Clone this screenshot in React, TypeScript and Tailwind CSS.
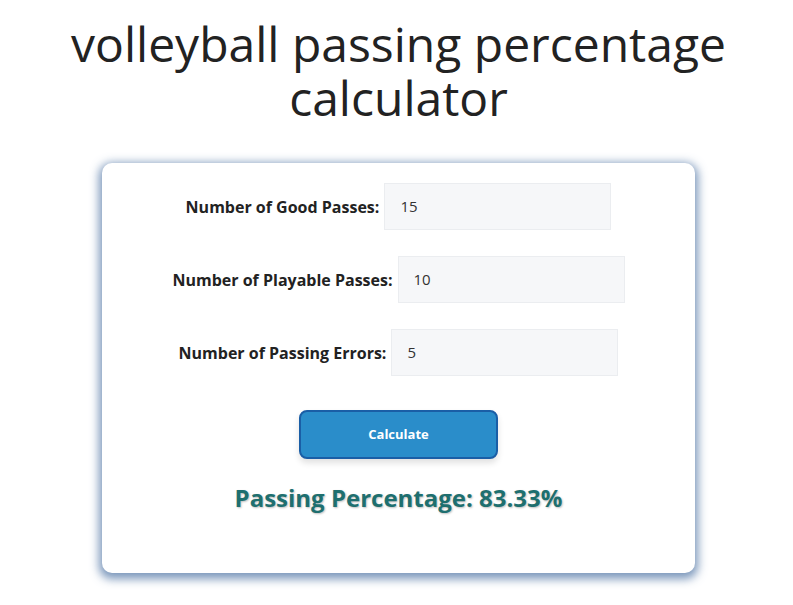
import React from "react";

const font = { fontFamily: '"Open Sans", "Noto Sans", sans-serif' };

function Row({ label, value }: { label: string; value: string }) {
  return (
    <div className="flex items-center justify-center">
      <label className="text-[16px] font-bold text-[#222] mr-[5px] whitespace-nowrap">{label}</label>
      <div className="w-[227px] h-[47px] bg-[#f6f7f9] border border-[#ebedf0] flex items-center pl-[15px] text-[15px] text-[#333]">
        {value}
      </div>
    </div>
  );
}

export default function App() {
  return (
    <div className="min-h-[605px] bg-white pl-1 flex flex-col items-center" style={font}>
      <h1 className="text-[48px] leading-[54px] text-[#222] text-center mt-[17px] w-[700px]">
        volleyball passing percentage calculator
      </h1>
      <div className="mt-[38px] w-[593px] h-[410px] bg-white rounded-[10px] shadow-[0_3px_10px_3px_rgba(90,125,170,0.8)] pt-[20px] flex flex-col items-center">
        <div className="flex flex-col gap-[26px] w-full">
          <Row label="Number of Good Passes:" value="15" />
          <Row label="Number of Playable Passes:" value="10" />
          <Row label="Number of Passing Errors:" value="5" />
        </div>
        <button className="mt-[34px] w-[199px] h-[49px] rounded-[8px] bg-[#2a8dca] border-2 border-[#1a5ea6] text-white text-[13px] font-bold shadow-[0_4px_6px_rgba(0,0,0,0.12)]">
          Calculate
        </button>
        <div className="mt-[21px] text-[24px] font-bold text-[#1e6f6f] [text-shadow:1px_1px_2px_rgba(0,0,0,0.25)]">
          Passing Percentage: 83.33%
        </div>
      </div>
    </div>
  );
}
